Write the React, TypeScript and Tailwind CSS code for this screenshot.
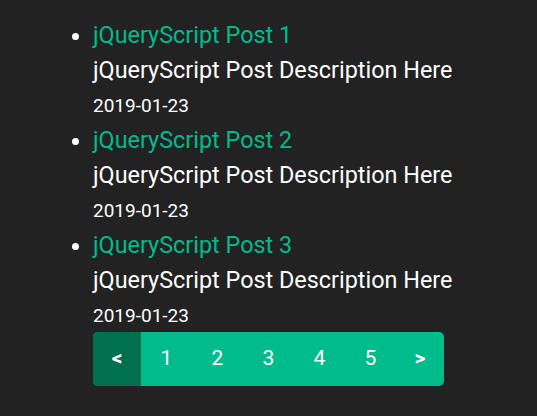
import React from "react";

const posts = [1, 2, 3];

export default function App() {
  return (
    <div
      className="w-[537px] h-[416px] bg-[#222222] text-white pl-[53px] pt-[18px]"
      style={{ fontFamily: "Roboto, 'Liberation Sans', sans-serif" }}
    >
      <ul className="list-disc pl-10 text-[23.4px]">
        {posts.map((n) => (
          <li key={n}>
            <div className="text-[23.4px] leading-[35px] text-[#00bc8c]">jQueryScript Post {n}</div>
            <div className="text-[23.4px] leading-[35px]">jQueryScript Post Description Here</div>
            <div className="text-[19px] leading-[35px]">2019-01-23</div>
          </li>
        ))}
      </ul>
      <div className="ml-10 -mt-[1px] flex w-[351px] h-[54px] rounded-[5px] overflow-hidden bg-[#00bc8c] text-[21px]">
        <div className="w-[48px] bg-[#00704f] flex items-center justify-center font-bold text-[21px]">&lt;</div>
        {[1, 2, 3, 4, 5].map((n) => (
          <div key={n} className="w-[51px] flex items-center justify-center">{n}</div>
        ))}
        <div className="w-[48px] flex items-center justify-center font-bold text-[21px]">&gt;</div>
      </div>
    </div>
  );
}
